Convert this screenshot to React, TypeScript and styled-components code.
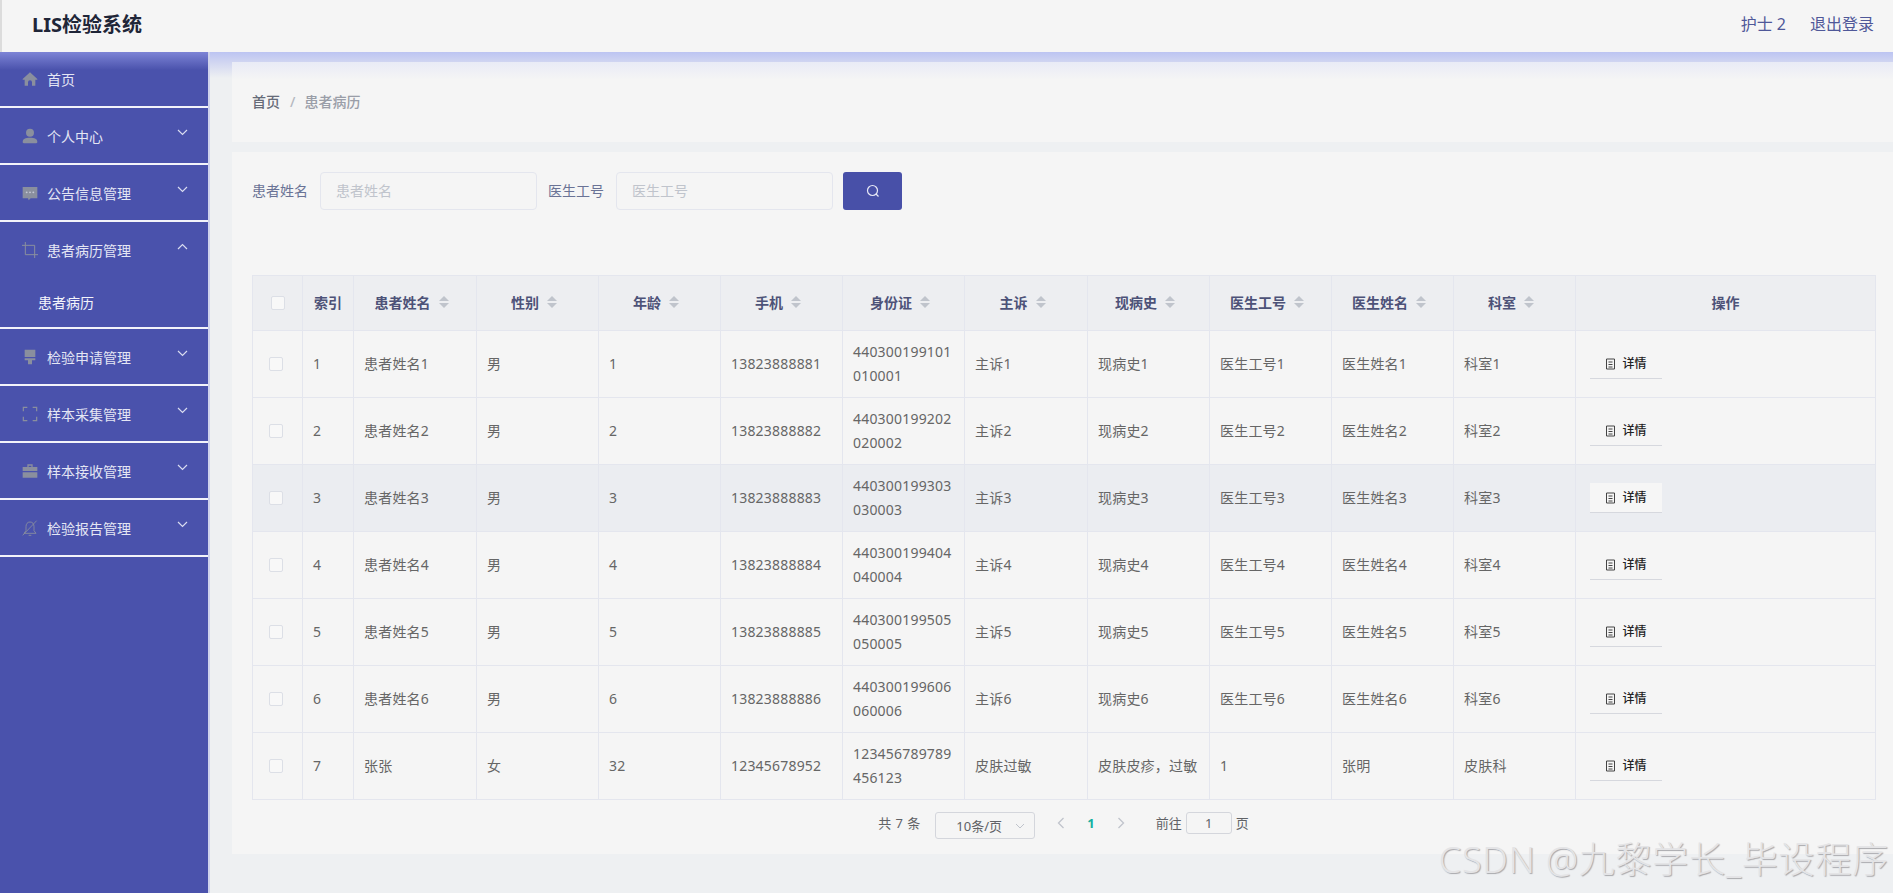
import React from 'react';
import styled, { createGlobalStyle } from 'styled-components';

const FONT = '"Noto Sans", "Noto Sans CJK SC", sans-serif';

const Global = createGlobalStyle`
  html, body { margin: 0; padding: 0; height: 100%; overflow: hidden; background: #eef0f2; }
  * { box-sizing: border-box; }
  body { font-family: ${FONT}; font-size: 14px; color: #666; }
`;

const Page = styled.div`
  position: relative;
  height: 893px;
  display: flex;
  flex-direction: column;
  overflow: hidden;
`;
const TopBar = styled.header`
  height: 52px;
  flex: none;
  display: flex;
  align-items: center;
  justify-content: space-between;
  padding: 0 19px 6px 30px;
  background: #f5f5f5;
  border-left: 2px solid #dcdcdc;
`;
const Brand = styled.div`
  font-size: 20px;
  font-weight: 700;
  color: #1f2638;
`;
const TopLinks = styled.div`
  display: flex;
  gap: 24px;
  font-size: 16px;
  color: #4f5899;
`;
const Body = styled.div`
  flex: 1;
  display: flex;
  min-height: 0;
`;
const Side = styled.aside`
  width: 208px;
  flex: none;
  background: linear-gradient(#7d84d6 0, #4a52ac 18px);
  box-shadow: 2px 0 0 #cfd3ec;
  position: relative;
`;
const MenuRow = styled.div`
  height: 55px;
  display: flex;
  align-items: center;
  padding: 0 20px 0 22px;
  color: #e4e6f4;
  font-size: 14px;
  svg.icon { width: 16px; height: 16px; margin-right: 9px; flex: none; }
`;
const MenuLabel = styled.span`
  flex: 1;
`;
const MenuGroup = styled.div`
  border-bottom: 2px solid #f2f3fa;
  &:first-child > div:first-child { height: 54px; }
`;
const SubRow = styled.div`
  height: 50px;
  display: flex;
  align-items: center;
  padding: 0 0 0 38px;
  color: #f4f5fb;
  font-size: 14px;
`;
const Main = styled.main`
  flex: 1;
  min-width: 0;
  padding: 10px 0 0 24px;
  background: linear-gradient(#bcc4f2 0, #d0d5f1 10px, #eef0f2 26px);
`;
const CrumbCard = styled.div`
  height: 80px;
  display: flex;
  align-items: center;
  padding: 0 0 2px 20px;
  background: linear-gradient(#e9ebf6 0, #f5f5f5 18px);
  font-weight: 500;
`;
const CrumbHome = styled.span`
  color: #666b78;
`;
const CrumbSep = styled.span`
  color: #b4b8c0;
  margin: 0 9px 0 10px;
`;
const CrumbNow = styled.span`
  color: #9a9ea8;
`;
const ListCard = styled.section`
  margin-top: 10px;
  height: 702px;
  background: #f5f5f5;
  padding: 20px 18px 0 20px;
`;
const SearchRow = styled.div`
  display: flex;
  align-items: center;
  height: 38px;
  margin-bottom: 65px;
`;
const SearchLabel = styled.label`
  color: #6a7396;
  margin-right: 12px;
  padding-bottom: 2px;
`;
const SearchInput = styled.input`
  width: 217px;
  height: 38px;
  margin-right: 11px;
  padding: 0 15px 2px;
  border: 1px solid #e4e6ee;
  border-radius: 4px;
  background: #f5f5f5;
  font: 14px ${FONT};
  outline: none;
  &::placeholder { color: #c0c4cc; opacity: 1; }
  &:last-of-type { margin-right: 10px; }
`;
const SearchButton = styled.button`
  width: 59px;
  height: 38px;
  border: 0;
  border-radius: 3px;
  background: #4850a8;
  display: flex;
  align-items: center;
  justify-content: center;
`;
const Table = styled.table`
  width: 1623px;
  table-layout: fixed;
  border-collapse: separate;
  border-spacing: 0;
  border-top: 1px solid #e4e6ee;
  border-left: 1px solid #e4e6ee;
`;
const Th = styled.th`
  height: 55px;
  padding: 0 0 3px;
  background: #edeef1;
  border-right: 1px solid #e4e6ee;
  border-bottom: 1px solid #e4e6ee;
  color: #4d5278;
  font-size: 14px;
  font-weight: 700;
  text-align: center;
`;
const ThInner = styled.span`
  display: inline-flex;
  align-items: center;
  gap: 8px;
  margin-right: 7px;
`;
const Caret = styled.span`
  display: inline-flex;
  flex-direction: column;
  gap: 2px;
  &::before, &::after {
    content: '';
    width: 0;
    height: 0;
    border-left: 5px solid transparent;
    border-right: 5px solid transparent;
  }
  &::before { border-bottom: 5px solid #c0c4cc; }
  &::after { border-top: 5px solid #c0c4cc; }
`;
const Tr = styled.tr<{ $hover?: boolean }>`
  background: ${p => (p.$hover ? '#ebedf1' : '#f5f5f5')};
`;
const Td = styled.td`
  height: 67px;
  padding: 0 10px;
  border-right: 1px solid #e4e6ee;
  border-bottom: 1px solid #e4e6ee;
  color: #666;
  font-size: 14px;
  line-height: 24px;
  letter-spacing: 0.2px;
  word-break: break-all;
`;
const CheckCell = styled(Td)`
  padding: 0;
`;
const Check = styled.span<{ $head?: boolean }>`
  display: block;
  width: 14px;
  height: 14px;
  margin-left: ${p => (p.$head ? '18px' : '16px')};
  margin-top: ${p => (p.$head ? '3px' : '0')};
  border: 1px solid #dcdfe6;
  border-radius: 2px;
  background: #f8f8f8;
`;
const DetailButton = styled.span<{ $hover?: boolean }>`
  display: inline-flex;
  align-items: center;
  justify-content: center;
  gap: 6px;
  width: 72px;
  height: 30px;
  margin-left: 4px;
  vertical-align: middle;
  background: ${p => (p.$hover ? '#f6f6f6' : 'transparent')};
  border-bottom: 1px solid #d6d8de;
  color: #222;
  font-size: 12px;
  font-weight: 500;
  letter-spacing: 0;
`;
const Pager = styled.div`
  display: flex;
  justify-content: center;
  align-items: flex-start;
  margin-top: 12px;
  font-size: 13px;
  line-height: 22px;
  color: #606266;
`;
const Total = styled.span`
  margin-right: 15px;
  word-spacing: 1px;
`;
const SizeSelect = styled.div`
  width: 100px;
  height: 27px;
  display: flex;
  align-items: center;
  justify-content: space-between;
  padding: 0 9px 0 20px;
  border: 1px solid #d4d6dc;
  border-radius: 3px;
  margin-right: 22px;
`;
const PageArrow = styled.span`
  display: flex;
  height: 22px;
  align-items: center;
`;
const PageNow = styled.span`
  margin: 0 22px;
  color: #17b09f;
  font-weight: 700;
`;
const GoLabel = styled.span`
  margin-left: 31px;
`;
const GoInput = styled.div`
  width: 46px;
  height: 22px;
  margin: 0 4px;
  text-align: center;
  border: 1px solid #d4d6dc;
  border-radius: 3px;
  line-height: 20px;
`;
const Watermark = styled.div`
  position: absolute;
  right: 4px;
  bottom: 11px;
  font-family: "Noto Sans", "Noto Sans CJK SC", sans-serif;
  font-size: 36px;
  font-weight: 300;
  line-height: 44px;
  letter-spacing: 0.8px;
  color: #e4e4e6;
  text-shadow: 1px 1px 1px #a8a8ac;
  white-space: nowrap;
`;

const I = ({ children }: { children: React.ReactNode }) => (
  <svg className="icon" viewBox="0 0 24 24" fill="#8a8f9e">{children}</svg>
);
const HomeIcon = () => (
  <I><path d="M12 2 1 12v1h3v9h5v-5a3 3 0 0 1 6 0v5h5v-9h3v-1z" /></I>
);
const UserIcon = () => (
  <I><circle cx="12" cy="7" r="6" /><path d="M1 21c0-5 4-6.500 11-6.500S23 16 23 21c0 1.500-1 2-3 2H4c-2 0-3-.5-3-2z" /></I>
);
const ChatIcon = () => (
  <I>
    <path d="M1 3h22v17H13l-3 3-1-3H1z" />
    <circle cx="7" cy="11" r="1.400" fill="#c5c8d6" /><circle cx="12" cy="11" r="1.400" fill="#c5c8d6" /><circle cx="17" cy="11" r="1.400" fill="#c5c8d6" />
  </I>
);
const CropIcon = () => (
  <I><path d="M5 0v19h19M0 5h19v19" fill="none" stroke="#8a8f9e" strokeWidth="1.500" /></I>
);
const BrushIcon = () => (
  <I><path d="M4 1h16v11H4zM4 14h16v3h-5v6H9v-6H4z" /></I>
);
const FullIcon = () => (
  <I><path d="M8 2H2v6M16 2h6v6M2 16v6h6M22 16v6h-6" fill="none" stroke="#8a8f9e" strokeWidth="1.800" /></I>
);
const CaseIcon = () => (
  <I><path d="M8 6V2h8v4h7v6H1V6zm2-2v2h4V4zM1 14h22v8H1z" fillRule="evenodd" /></I>
);
const BellOffIcon = () => (
  <I>
    <path d="M12 3c-4 0-6 3-6 7v6l-3 4h18l-3-4v-6c0-4-2-7-6-7zM10 23h4M22 1 1 23" fill="none" stroke="#8a8f9e" strokeWidth="1.300" />
  </I>
);
const Chevron = ({ up }: { up?: boolean }) => (
  <svg width="11" height="7" viewBox="0 0 11 7" style={{ marginTop: -6 }}>
    <path d={up ? 'M1 6l4.500-4.500L10 6' : 'M1 1l4.500 4.500L10 1'} fill="none" stroke="#d9dcf0" strokeWidth="1.200" />
  </svg>
);
const SearchIcon = () => (
  <svg width="14" height="14" viewBox="0 0 14 14">
    <circle cx="6.500" cy="6.500" r="5" fill="none" stroke="#e8e9f6" strokeWidth="1.200" />
    <path d="M10 10l2.500 2.500" stroke="#e8e9f6" strokeWidth="1.200" />
  </svg>
);
const TicketIcon = () => (
  <svg width="11" height="12" viewBox="0 0 11 12">
    <path d="M1.500 1h8v10h-8zM3.500 4h4M3.500 6.500h4M3.500 9h4" fill="none" stroke="#444" strokeWidth="1" />
  </svg>
);
const Arrow = ({ left }: { left?: boolean }) => (
  <svg width="8" height="12" viewBox="0 0 8 12">
    <path d={left ? 'M6.500 1 1.500 6l5 5' : 'M1.500 1l5 5-5 5'} fill="none" stroke="#c0c4cc" strokeWidth="1.300" />
  </svg>
);

const menu: { label: string; icon: React.ReactNode; arrow?: boolean; open?: boolean }[] = [
  { label: '首页', icon: <HomeIcon /> },
  { label: '个人中心', icon: <UserIcon />, arrow: true },
  { label: '公告信息管理', icon: <ChatIcon />, arrow: true },
  { label: '患者病历管理', icon: <CropIcon />, arrow: true, open: true },
  { label: '检验申请管理', icon: <BrushIcon />, arrow: true },
  { label: '样本采集管理', icon: <FullIcon />, arrow: true },
  { label: '样本接收管理', icon: <CaseIcon />, arrow: true },
  { label: '检验报告管理', icon: <BellOffIcon />, arrow: true },
];

const widths = [50, 51, 123, 122, 122, 122, 122, 123, 122, 122, 122, 122, 300];
const sortable = ['患者姓名', '性别', '年龄', '手机', '身份证', '主诉', '现病史', '医生工号', '医生姓名', '科室'];

const ids = ['440300199101010001', '440300199202020002', '440300199303030003', '440300199404040004', '440300199505050005', '440300199606060006'];
const rows = ids.map((id, i) => {
  const n = i + 1;
  return [
    String(n),
    `患者姓名${n}`,
    '男',
    String(n),
    `1382388888${n}`,
    id,
    `主诉${n}`,
    `现病史${n}`,
    `医生工号${n}`,
    `医生姓名${n}`,
    `科室${n}`,
  ];
});
rows.push(['7', '张张', '女', '32', '12345678952', '123456789789456123', '皮肤过敏', '皮肤皮疹，过敏', '1', '张明', '皮肤科']);

export default function App() {
  return (
    <Page>
      <Global />
      <TopBar>
        <Brand>LIS检验系统</Brand>
        <TopLinks>
          <span>护士 2</span>
          <span>退出登录</span>
        </TopLinks>
      </TopBar>
      <Body>
        <Side>
          {menu.map(m => (
            <MenuGroup key={m.label}>
              <MenuRow>
                {m.icon}
                <MenuLabel>{m.label}</MenuLabel>
                {m.arrow && <Chevron up={m.open} />}
              </MenuRow>
              {m.open && <SubRow>患者病历</SubRow>}
            </MenuGroup>
          ))}
        </Side>
        <Main>
          <CrumbCard>
            <CrumbHome>首页</CrumbHome>
            <CrumbSep>/</CrumbSep>
            <CrumbNow>患者病历</CrumbNow>
          </CrumbCard>
          <ListCard>
            <SearchRow>
              <SearchLabel>患者姓名</SearchLabel>
              <SearchInput placeholder="患者姓名" readOnly />
              <SearchLabel>医生工号</SearchLabel>
              <SearchInput placeholder="医生工号" readOnly />
              <SearchButton aria-label="搜索"><SearchIcon /></SearchButton>
            </SearchRow>
            <Table>
              <colgroup>
                {widths.map((w, i) => <col key={i} style={{ width: w }} />)}
              </colgroup>
              <thead>
                <tr>
                  <Th><Check $head /></Th>
                  <Th>索引</Th>
                  {sortable.map(s => (
                    <Th key={s}><ThInner>{s}<Caret /></ThInner></Th>
                  ))}
                  <Th>操作</Th>
                </tr>
              </thead>
              <tbody>
                {rows.map((r, i) => (
                  <Tr key={i} $hover={i === 2}>
                    <CheckCell><Check /></CheckCell>
                    {r.map((c, j) => <Td key={j}>{c}</Td>)}
                    <Td>
                      <DetailButton $hover={i === 2}><TicketIcon />详情</DetailButton>
                    </Td>
                  </Tr>
                ))}
              </tbody>
            </Table>
            <Pager>
              <Total>共 7 条</Total>
              <SizeSelect>
                <span>10条/页</span>
                <svg width="10" height="6" viewBox="0 0 10 6"><path d="M1 1l4 4 4-4" fill="none" stroke="#c0c4cc" /></svg>
              </SizeSelect>
              <PageArrow><Arrow left /></PageArrow>
              <PageNow>1</PageNow>
              <PageArrow><Arrow /></PageArrow>
              <GoLabel>前往</GoLabel>
              <GoInput>1</GoInput>
              <span>页</span>
            </Pager>
          </ListCard>
        </Main>
      </Body>
      <Watermark>CSDN @九黎学长_毕设程序</Watermark>
    </Page>
  );
}
